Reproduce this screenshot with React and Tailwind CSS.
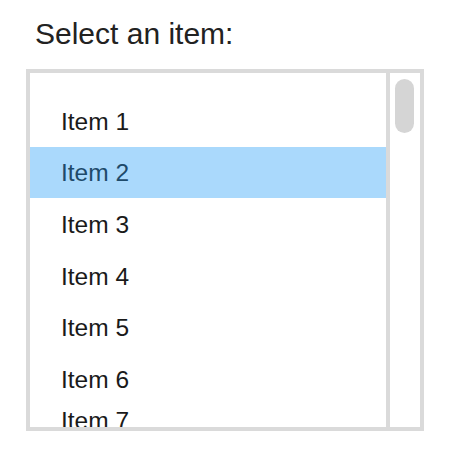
import React from "react";

export default function App() {
  const items = ["Item 1", "Item 2", "Item 3", "Item 4", "Item 5", "Item 6", "Item 7", "Item 8"];
  return (
    <div className="w-[456px] h-[460px] bg-white pl-[26px] pt-[17px]" style={{ fontFamily: '"Liberation Sans", Arial, sans-serif' }}>
      <div className="pl-[9px] text-[30px] leading-[34px] text-[#222]">Select an item:</div>
      <div className="mt-[18px] w-[398px] h-[362px] border-4 border-[#dadada] flex">
        <div className="w-[356px] h-full overflow-hidden pt-[22px]">
          {items.map((it, i) => (
            <div
              key={it}
              className={
                (i === 6 ? "-mt-[10px] " : "") +
                "h-[51.6px] flex items-center pl-[31px] pt-[2px] text-[24.5px] leading-[24px] " +
                (i === 1 ? "bg-[#aad9fc] text-[#1e4a6a]" : "text-[#1a1a1a]")
              }
            >
              {it}
            </div>
          ))}
        </div>
        <div className="w-[4px] h-full bg-[#dadada]"></div>
        <div className="flex-1 h-full pt-[6px] pl-[5px]">
          <div className="w-[19px] h-[54px] rounded-full bg-[#d5d5d5]"></div>
        </div>
      </div>
    </div>
  );
}
